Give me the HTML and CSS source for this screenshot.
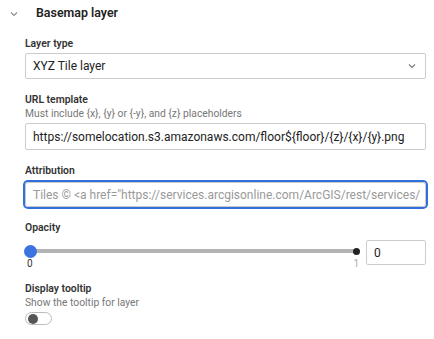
FILE: index.html
```html
<!DOCTYPE html>
<html lang="en">
<head>
  <meta charset="UTF-8" />
  <title>Basemap layer</title>
  <link rel="stylesheet" href="styles.css">
</head>
<body>

  <!-- Section header -->
  <div class="section-header">
    <svg class="caret" width="8" height="6" viewBox="0 0 8 6">
      <polyline points="1,1.5 4,4.5 7,1.5" fill="none" stroke="#8a8a8a" stroke-width="1.1"/>
    </svg>
    <span class="section-title">Basemap layer</span>
  </div>

  <div class="fields">

    <!-- Layer type -->
    <div class="field field-first">
      <div class="label">Layer type</div>
      <div class="select">
        <span>XYZ Tile layer</span>
        <svg width="8" height="6" viewBox="0 0 8 6">
          <polyline points="1,1.5 4,4.5 7,1.5" fill="none" stroke="#777" stroke-width="1.1"/>
        </svg>
      </div>
    </div>

    <!-- URL template -->
    <div class="field">
      <div class="label">URL template</div>
      <div class="helper">Must include {x}, {y} or {-y}, and {z} placeholders</div>
      <div class="input">https://somelocation.s3.amazonaws.com/floor${floor}/{z}/{x}/{y}.png</div>
    </div>

    <!-- Attribution -->
    <div class="field">
      <div class="label">Attribution</div>
      <div class="input input-focus placeholder">Tiles © &lt;a href="https://services.arcgisonline.com/ArcGIS/rest/services/</div>
    </div>

    <!-- Opacity -->
    <div class="field">
      <div class="label">Opacity</div>
      <div class="slider-row">
        <div class="slider">
          <div class="track">
            <span class="thumb"></span>
            <span class="end-dot"></span>
          </div>
          <div class="ticks">
            <span>0</span>
            <span class="tick-max">1</span>
          </div>
        </div>
        <div class="number">0</div>
      </div>
    </div>

    <!-- Display tooltip -->
    <div class="field field-last">
      <div class="label">Display tooltip</div>
      <div class="helper">Show the tooltip for layer</div>
      <div class="toggle"><span class="knob"></span></div>
    </div>

  </div>

</body>
</html>
```

FILE: styles.css
```css
* {
  margin: 0;
  padding: 0;
  box-sizing: border-box;
}

body {
  font-family: Roboto, "Liberation Sans", sans-serif;
  background: #fff;
  color: #222;
  width: 434px;
  height: 339px;
  overflow: hidden;
}

.section-header {
  display: flex;
  align-items: center;
  height: 24px;
  padding-left: 10px;
}

.caret {
  margin-top: 3px;
}

.section-title {
  margin-left: 18px;
  font-size: 12.4px;
  font-weight: 600;
  color: #222;
}

.fields {
  padding: 0 8px 0 25px;
}

.field {
  margin-top: 14px;
}

.field-first {
  margin-top: 13px;
}

.label {
  font-size: 10.4px;
  line-height: 14px;
  font-weight: 600;
  color: #333;
  margin-bottom: 2px;
}

.helper {
  font-size: 10.3px;
  line-height: 13px;
  color: #777;
  margin-top: -2px;
  margin-bottom: 3px;
}

.select,
.input {
  height: 27px;
  border: 1px solid #ccc;
  border-radius: 2px;
  font-size: 12px;
  color: #222;
  padding: 0 9px 0 7px;
  display: flex;
  align-items: center;
  white-space: nowrap;
  overflow: hidden;
}

.select {
  height: 26px;
  justify-content: space-between;
}

.input-focus {
  border-color: #c8c8c8;
  box-shadow: 0 0 0 2px #3070dd;
  border-radius: 3px;
  margin-top: 4px;
  height: 25px;
}

.placeholder {
  color: #9a9a9a;
}

.slider-row {
  display: flex;
  gap: 8px;
  margin-top: 5px;
}

.slider {
  flex: 1;
  padding-top: 9px;
}

.track {
  position: relative;
  height: 4px;
  background: #b3b3b3;
  border-radius: 2px;
}

.thumb {
  position: absolute;
  left: -1px;
  top: -4px;
  width: 13px;
  height: 13px;
  border-radius: 50%;
  background: #3b74e0;
}

.end-dot {
  position: absolute;
  right: -2px;
  top: -1px;
  width: 7px;
  height: 7px;
  border-radius: 50%;
  background: #222;
}

.ticks {
  display: flex;
  justify-content: space-between;
  font-size: 10px;
  line-height: 12px;
  color: #333;
  margin-top: 5px;
  padding: 0 0 0 2px;
}

.tick-max {
  color: #aaa;
  margin-right: -1px;
}

.number {
  width: 60px;
  height: 25px;
  border: 1px solid #ccc;
  border-radius: 2px;
  font-size: 12px;
  padding-left: 7px;
  display: flex;
  align-items: center;
}

.field-last {
  margin-top: 12px;
}

.toggle {
  width: 27px;
  height: 13px;
  border: 1px solid #bbb;
  border-radius: 7px;
  padding: 0 0 0 2px;
  display: flex;
  align-items: center;
  margin-top: 3px;
}

.knob {
  width: 10px;
  height: 10px;
  border-radius: 50%;
  background: #555;
}
```
